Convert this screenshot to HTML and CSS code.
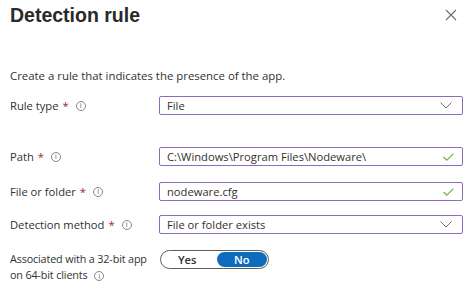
FILE: index.html
```html
<!DOCTYPE html>
<html>
<head>
<meta charset="utf-8">
<link rel="stylesheet" href="styles.css">
</head>
<body>
<div class="panel">
  <header class="head">
    <h1 class="title">Detection rule</h1>
    <button class="close" aria-label="Close">
      <svg width="12" height="12" viewBox="0 0 12 12"><path d="M1 1L11 11M11 1L1 11" stroke="#6e6e6e" stroke-width="1.1" fill="none"/></svg>
    </button>
  </header>
  <p class="desc">Create a rule that indicates the presence of the app.</p>

  <div class="row r1">
    <div class="label">Rule type<span class="req">*</span><span class="info">i</span></div>
    <div class="field">
      <span class="value">File</span>
      <svg class="chev" width="12" height="7" viewBox="0 0 12 7"><path d="M0.5 0.5L6 6L11.5 0.5" stroke="#6e6e6e" stroke-width="1" fill="none"/></svg>
    </div>
  </div>

  <div class="row r2">
    <div class="label">Path<span class="req">*</span><span class="info">i</span></div>
    <div class="field">
      <span class="value">C:\Windows\Program Files\Nodeware\</span>
      <svg class="check" width="11" height="8" viewBox="0 0 11 8"><path d="M0.5 4L3.8 7.2L10.5 0.6" stroke="#6fae3c" stroke-width="1.1" fill="none"/></svg>
    </div>
  </div>

  <div class="row r3">
    <div class="label">File or folder<span class="req">*</span><span class="info">i</span></div>
    <div class="field">
      <span class="value">nodeware.cfg</span>
      <svg class="check" width="11" height="8" viewBox="0 0 11 8"><path d="M0.5 4L3.8 7.2L10.5 0.6" stroke="#6fae3c" stroke-width="1.1" fill="none"/></svg>
    </div>
  </div>

  <div class="row r4">
    <div class="label">Detection method<span class="req">*</span><span class="info">i</span></div>
    <div class="field">
      <span class="value">File or folder exists</span>
      <svg class="chev" width="12" height="7" viewBox="0 0 12 7"><path d="M0.5 0.5L6 6L11.5 0.5" stroke="#6e6e6e" stroke-width="1" fill="none"/></svg>
    </div>
  </div>

  <div class="row r5">
    <div class="label two">Associated with a 32-bit app<br>on 64-bit clients<span class="info">i</span></div>
    <div class="toggle">
      <span class="opt">Yes</span>
      <span class="opt on">No</span>
    </div>
  </div>
</div>
</body>
</html>
```
FILE: styles.css
```css
* { box-sizing: border-box; }
html, body { margin: 0; padding: 0; background: #fff; }
body {
  font-family: "Open Sans", "Noto Sans", sans-serif;
  color: #323130;
  font-size: 11.2px;
}
.panel { padding: 0 11px 0 10px; }
.head {
  display: flex;
  justify-content: space-between;
  align-items: flex-start;
  height: 40px;
}
.title {
  margin: 0;
  padding-top: 2px;
  font-family: "Liberation Sans", Arial, sans-serif;
  font-size: 19.5px;
  font-weight: 700;
  line-height: 26px;
  color: #2b2a29;
}
.close {
  border: 0;
  background: none;
  padding: 0;
  margin: 9px 6px 0 0;
  width: 12px;
  height: 12px;
  display: flex;
}
.desc {
  margin: 28px 0 0;
  line-height: 16px;
  font-size: 11.4px;
}
.row {
  display: flex;
  align-items: center;
}
.r1 { margin-top: 12px; }
.r2 { margin-top: 32px; }
.r3 { margin-top: 16px; }
.r4 { margin-top: 14px; }
.r5 { margin-top: 16px; align-items: flex-start; }
.label {
  width: 149px;
  flex: none;
  display: flex;
  align-items: center;
  line-height: 16px;
}
.label.two {
  display: block;
  margin-top: 1px;
  font-size: 10.8px;
  letter-spacing: -0.15px;
}
.req { color: #a4262c; margin-left: 4px; }
.info {
  display: inline-flex;
  align-items: center;
  justify-content: center;
  width: 10px;
  height: 10px;
  border: 1px solid #8a8886;
  border-radius: 50%;
  font-size: 7px;
  line-height: 1;
  color: #605e5c;
  margin-left: 7px;
  vertical-align: middle;
  letter-spacing: 0;
}
.field {
  flex: 1;
  height: 19px;
  border: 1px solid #8e6bbf;
  border-radius: 2px;
  display: flex;
  align-items: center;
  justify-content: space-between;
  padding: 0 8px 0 7px;
}
.value { line-height: 16px; }
.chev { margin-right: 2px; }
.toggle {
  flex: none;
  margin-left: 1px;
  width: 109px;
  height: 19px;
  border: 1px solid #605e5c;
  border-radius: 10px;
  display: flex;
  align-items: stretch;
  padding: 1px;
  font-weight: 600;
}
.opt {
  flex: 1;
  display: flex;
  align-items: center;
  justify-content: center;
  border-radius: 8px;
  line-height: 1;
  padding-right: 4px;
}
.opt.on {
  background: #0f6cbd;
  color: #fff;
  padding-right: 0;
}
```
